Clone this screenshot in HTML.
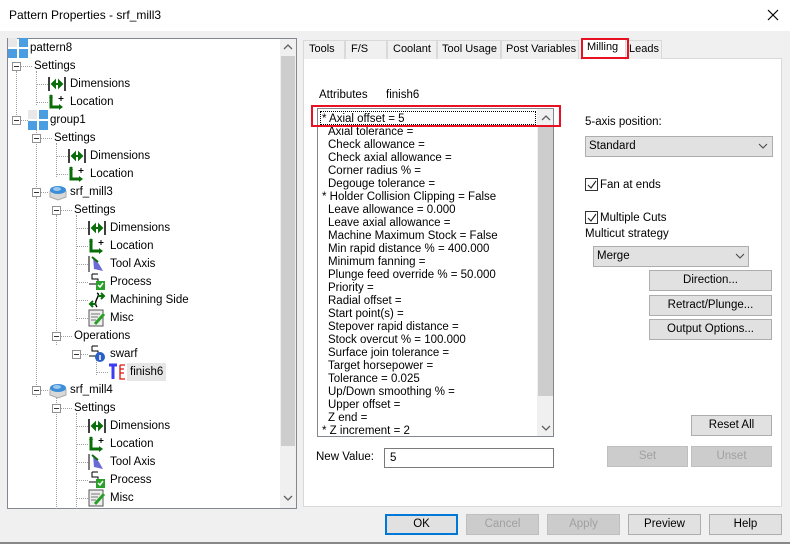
<!DOCTYPE html>
<html><head><meta charset="utf-8"><style>
*{box-sizing:border-box;margin:0;padding:0}
body{width:790px;height:544px;background:#f0f0f0;font-family:"Liberation Sans",sans-serif;font-size:11px;color:#000;position:relative;overflow:hidden}
.a{position:absolute;white-space:nowrap}
.btn{position:absolute;background:#e1e1e1;border:1px solid #adadad;text-align:center;line-height:19px;font-size:11.5px;white-space:nowrap}
.dis{color:#a0a0a0;background:#cccccc;border-color:#bfbfbf}
.tab{position:absolute;top:40px;height:19px;border:1px solid #d9d9d9;border-bottom:none;background:#f0f0f0;font-size:11px;line-height:17px;padding-left:5px;white-space:nowrap;overflow:hidden}
.row{position:absolute;height:18px;line-height:18px;font-size:11.5px;white-space:nowrap}
.exp{position:absolute;width:9px;height:9px;border:1px solid #919191;background:#fff}
.exp:after{content:"";position:absolute;left:1px;top:3px;width:5px;height:1px;background:#333}
.hd{position:absolute;height:1px;border-top:1px dotted #a0a0a0}
.vd{position:absolute;width:1px;border-left:1px dotted #a0a0a0}
.li{position:absolute;left:11px;font-size:11.5px;line-height:13px;white-space:nowrap}
.chk{position:absolute;width:13px;height:13px;border:1px solid #333;background:#fff}
</style></head><body>
<div class="a" style="left:0;top:0;width:790px;height:31px;background:#fff"></div>
<div class="a" style="left:9px;top:8px;font-size:12px">Pattern Properties - srf_mill3</div>
<svg class="a" style="left:767px;top:9px" width="12" height="12"><path d="M1 1L11 11M11 1L1 11" stroke="#000" stroke-width="1.2"/></svg>

<div class="a" style="left:7px;top:38px;width:290px;height:471px;background:#fff;border:1px solid #828790"></div>
<div class="a" style="left:280px;top:39px;width:16px;height:469px;background:#f0f0f0"></div>
<div class="a" style="left:281px;top:56px;width:14px;height:390px;background:#cdcdcd"></div>
<svg class="a" style="left:283px;top:44px" width="10" height="6"><path d="M1 5L5 1L9 5" stroke="#606060" fill="none" stroke-width="1.3"/></svg>
<svg class="a" style="left:283px;top:495px" width="10" height="6"><path d="M1 1L5 5L9 1" stroke="#606060" fill="none" stroke-width="1.3"/></svg>

<div class="vd" style="left:16px;top:71px;height:50px"></div>
<div class="vd" style="left:36px;top:71px;height:34px"></div>
<div class="vd" style="left:36px;top:125px;height:70px"></div>
<div class="vd" style="left:36px;top:197px;height:200px"></div>
<div class="vd" style="left:56px;top:143px;height:34px"></div>
<div class="vd" style="left:56px;top:215px;height:130px"></div>
<div class="vd" style="left:56px;top:395px;height:114px"></div>
<div class="vd" style="left:76px;top:215px;height:106px"></div>
<div class="vd" style="left:76px;top:413px;height:96px"></div>
<div class="vd" style="left:96px;top:359px;height:16px"></div>

<div id="tree"></div>

<div class="a" style="left:303px;top:58px;width:479px;height:449px;background:#fff;border:1px solid #d9d9d9"></div>
<div class="tab" style="left:303px;width:42px">Tools</div>
<div class="tab" style="left:345px;width:42px">F/S</div>
<div class="tab" style="left:387px;width:50px">Coolant</div>
<div class="tab" style="left:437px;width:64px;padding-left:4px">Tool Usage</div>
<div class="tab" style="left:501px;width:78px;padding-left:4px">Post Variables</div>
<div class="tab" style="left:625px;width:37px;padding-left:3px">Leads</div>
<div class="tab" style="left:581px;top:38px;width:45px;height:22px;background:#fff;padding-left:5px">Milling</div>
<div class="a" style="left:581px;top:38px;width:48px;height:21px;border:2px solid #e81123"></div>

<div class="a" style="left:319px;top:89px;font-size:11.5px">Attributes</div>
<div class="a" style="left:386px;top:89px;font-size:11.5px">finish6</div>

<div class="a" style="left:317px;top:108px;width:237px;height:329px;background:#fff;border:1px solid #828790;overflow:hidden">
<div class="a" style="left:219px;top:0;width:17px;height:327px;background:#f0f0f0"></div>
<div class="a" style="left:220px;top:18px;width:15px;height:269px;background:#cdcdcd"></div>
<svg class="a" style="left:223px;top:6px" width="10" height="6"><path d="M1 5L5 1L9 5" stroke="#606060" fill="none" stroke-width="1.3"/></svg>
<svg class="a" style="left:223px;top:316px" width="10" height="6"><path d="M1 1L5 5L9 1" stroke="#606060" fill="none" stroke-width="1.3"/></svg>
<div class="a" style="left:2px;top:2px;width:216px;height:14px;border:1px dotted #000"></div>
<div id="lst"></div>
</div>
<div class="a" style="left:311px;top:105px;width:250px;height:22px;border:2px solid #e81123"></div>

<div class="a" style="left:585px;top:116px;font-size:11.5px">5-axis position:</div>
<div class="a" style="left:585px;top:136px;width:188px;height:21px;background:#e1e1e1;border:1px solid #adadad;font-size:11.5px;line-height:19px;padding-left:3px">Standard</div>
<svg class="a" style="left:758px;top:143px" width="10" height="6"><path d="M1 1L5 5L9 1" stroke="#444" fill="none"/></svg>
<div class="chk" style="left:585px;top:178px"></div>
<svg class="a" style="left:586px;top:179px" width="12" height="12"><path d="M2 6L5 9L10 2" stroke="#222" fill="none" stroke-width="1.1"/></svg>
<div class="a" style="left:600px;top:179px;font-size:11.5px">Fan at ends</div>
<div class="chk" style="left:585px;top:211px"></div>
<svg class="a" style="left:586px;top:212px" width="12" height="12"><path d="M2 6L5 9L10 2" stroke="#222" fill="none" stroke-width="1.1"/></svg>
<div class="a" style="left:600px;top:212px;font-size:11.5px">Multiple Cuts</div>
<div class="a" style="left:585px;top:228px;font-size:11.5px">Multicut strategy</div>
<div class="a" style="left:593px;top:246px;width:156px;height:21px;background:#e1e1e1;border:1px solid #adadad;font-size:11.5px;line-height:19px;padding-left:3px">Merge</div>
<svg class="a" style="left:735px;top:253px" width="10" height="6"><path d="M1 1L5 5L9 1" stroke="#444" fill="none"/></svg>
<div class="btn" style="left:649px;top:270px;width:123px;height:21px">Direction...</div>
<div class="btn" style="left:649px;top:295px;width:123px;height:21px">Retract/Plunge...</div>
<div class="btn" style="left:649px;top:319px;width:123px;height:21px">Output Options...</div>
<div class="btn" style="left:691px;top:415px;width:81px;height:21px">Reset All</div>
<div class="btn dis" style="left:607px;top:446px;width:81px;height:21px">Set</div>
<div class="btn dis" style="left:691px;top:446px;width:81px;height:21px">Unset</div>
<div class="a" style="left:316px;top:451px;font-size:11.5px">New Value:</div>
<div class="a" style="left:384px;top:448px;width:170px;height:20px;background:#fff;border:1px solid #7a7a7a;font-size:11.5px;line-height:18px;padding-left:5px">5</div>

<div class="btn" style="left:385px;top:514px;width:73px;height:21px;border:2px solid #0078d7;line-height:17px">OK</div>
<div class="btn dis" style="left:466px;top:514px;width:73px;height:21px">Cancel</div>
<div class="btn dis" style="left:547px;top:514px;width:73px;height:21px">Apply</div>
<div class="btn" style="left:628px;top:514px;width:73px;height:21px">Preview</div>
<div class="btn" style="left:709px;top:514px;width:73px;height:21px">Help</div>
<div class="a" style="left:0;top:542px;width:790px;height:2px;background:#888"></div>

<script>
var ic={
grid:'<svg width="20" height="20"><rect x="0" y="0" width="9" height="9" fill="#e8e8e8"/><rect x="11" y="0" width="9" height="9" fill="#4a9de0"/><rect x="0" y="11" width="9" height="9" fill="#4a9de0"/><rect x="11" y="11" width="9" height="9" fill="#4a9de0"/></svg>',
dim:'<svg width="18" height="18"><path d="M1 2V16M17 2V16" stroke="#000" stroke-width="1.5"/><path d="M4 9H14M4 9L7 6V12ZM14 9L11 6V12Z" stroke="#0a6e0a" fill="#0a6e0a" stroke-width="2"/></svg>',
loc:'<svg width="18" height="18"><path d="M3 2V14H13" stroke="#0a6e0a" stroke-width="3" fill="none"/><path d="M1 5L3 1L5 5M11 11L15 14L11 17" fill="#0a6e0a"/><path d="M13 3V8M10.5 5.5H15.5" stroke="#000"/></svg>',
axis:'<svg width="18" height="18"><path d="M1 1V17" stroke="#000"/><path d="M5 2L11 9L15 16L6 14Z" fill="#6b6bd6"/><path d="M4 2L10 7" stroke="#0a6e0a" stroke-width="2"/></svg>',
proc:'<svg width="18" height="18"><path d="M4 1H10M4 1V6H10V11M1 11H10" stroke="#000" fill="none"/><rect x="8" y="8" width="9" height="9" fill="#2aa02a"/><path d="M10 12L12 14L15 10" stroke="#fff" fill="none" stroke-width="1.5"/></svg>',
side:'<svg width="18" height="18"><path d="M9 2C14 4 4 10 9 16" stroke="#000" fill="none" stroke-width="1.4"/><path d="M10 5H16M13 2L16 5L13 8M2 13H8M5 10L2 13L5 16" stroke="#0a6e0a" stroke-width="2" fill="none"/></svg>',
misc:'<svg width="18" height="18"><rect x="1" y="1" width="14" height="16" fill="#eee" stroke="#555"/><path d="M3 5H12M3 8H10M3 11H8" stroke="#777"/><path d="M7 15L16 5" stroke="#2aa02a" stroke-width="3"/></svg>',
mill:'<svg width="20" height="18"><path d="M2 8L10 4L18 8V14L10 17L2 14Z" fill="#d8d8d8" stroke="#aaa"/><ellipse cx="10" cy="7" rx="8" ry="4" fill="#3c8ed8"/><ellipse cx="9" cy="6" rx="4" ry="2" fill="#9cc8f0"/></svg>',
swarf:'<svg width="18" height="18"><path d="M4 1H10M4 1V6H10V11M1 11H10" stroke="#000" fill="none"/><circle cx="12" cy="12" r="5" fill="#2a5ec8"/><path d="M12 10V15" stroke="#fff" stroke-width="1.5"/></svg>',
fin:'<svg width="18" height="18"><path d="M1 2H9M5 2V16" stroke="#3c3cf0" stroke-width="3"/><path d="M12 2H17M12 2V16H17M12 6H16M12 10H16" stroke="#e01010" stroke-width="1.3" fill="none"/></svg>'
};
var rows=[["pattern8",0,"grid",0],["Settings",1,"",1],["Dimensions",2,"dim"],["Location",2,"loc"],["group1",1,"grid",1],["Settings",2,"",1],["Dimensions",3,"dim"],["Location",3,"loc"],["srf_mill3",2,"mill",1],["Settings",3,"",1],["Dimensions",4,"dim"],["Location",4,"loc"],["Tool Axis",4,"axis"],["Process",4,"proc"],["Machining Side",4,"side"],["Misc",4,"misc"],["Operations",3,"",1],["swarf",4,"swarf",1],["finish6",5,"fin"],["srf_mill4",2,"mill",1],["Settings",3,"",1],["Dimensions",4,"dim"],["Location",4,"loc"],["Tool Axis",4,"axis"],["Process",4,"proc"],["Misc",4,"misc"]];
var h="";
rows.forEach(function(r,i){var y=39+18*i,L=r[1];
 if(L>0){h+='<div class="hd" style="left:'+(20*L-4)+'px;top:'+(y+9)+'px;width:'+(r[2]?12:16)+'px"></div>';}
 if(r[3]&&L>0)h+='<div class="exp" style="left:'+(20*L-8)+'px;top:'+(y+5)+'px"></div>';
 var tx;
 if(r[2]){h+='<div class="a" style="left:'+(8+20*L)+'px;top:'+(y+(r[2]=="grid"?-1:0))+'px">'+ic[r[2]]+'</div>';tx=30+20*L;}
 else tx=14+20*L;
 var bg=r[0]=="finish6"?'background:#e6e6e6;padding:0 3px;margin-left:-3px;':'';
 h+='<div class="row" style="left:'+tx+'px;top:'+y+'px;'+bg+'">'+r[0]+'</div>';
});
document.getElementById("tree").innerHTML=h;
var L=["* Axial offset = 5","Axial tolerance =","Check allowance =","Check axial allowance =","Corner radius % =","Degouge tolerance =","* Holder Collision Clipping = False","Leave allowance = 0.000","Leave axial allowance =","Machine Maximum Stock = False","Min rapid distance % = 400.000","Minimum fanning =","Plunge feed override % = 50.000","Priority =","Radial offset =","Start point(s) =","Stepover rapid distance =","Stock overcut % = 100.000","Surface join tolerance =","Target horsepower =","Tolerance = 0.025","Up/Down smoothing % =","Upper offset =","Z end =","* Z increment = 2"];
var s="";
L.forEach(function(t,i){var st=t[0]=="*";s+='<div class="li" style="top:'+(4+13*i)+'px;left:'+(st?4:10)+'px">'+t+'</div>';});
document.getElementById("lst").innerHTML=s;
</script>
</body></html>
